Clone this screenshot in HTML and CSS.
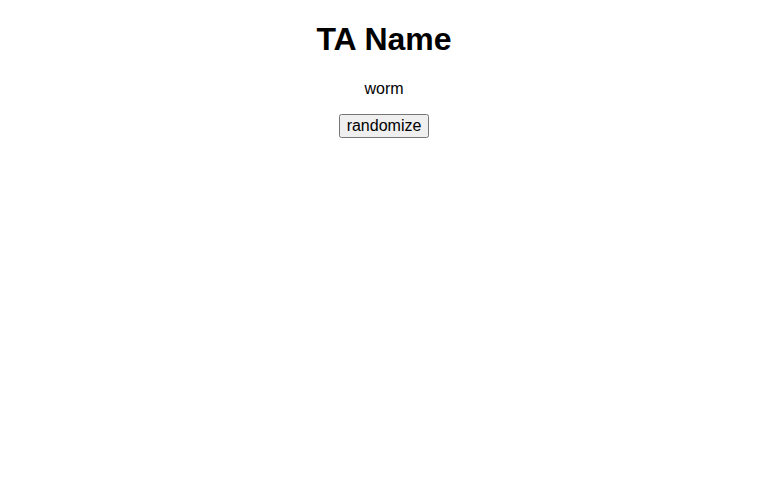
FILE: index.html
```html
<!DOCTYPE html>
<html lang="en">
<head>
    <meta charset="UTF-8">
    <title>TA Name</title>
    <link rel="stylesheet" href="styles.css">
</head>
<body>
    <div class="app">
        <h1 class="title">TA Name</h1>
        <p class="name">worm</p>
        <button class="btn">randomize</button>
    </div>
</body>
</html>
```

FILE: styles.css
```css
body {
    margin: 0;
    font-family: 'Liberation Sans', Arial, sans-serif;
    color: #000;
    background: #fff;
}

.app {
    text-align: center;
}

.btn {
    font-family: inherit;
    font-size: 16px;
}
```
